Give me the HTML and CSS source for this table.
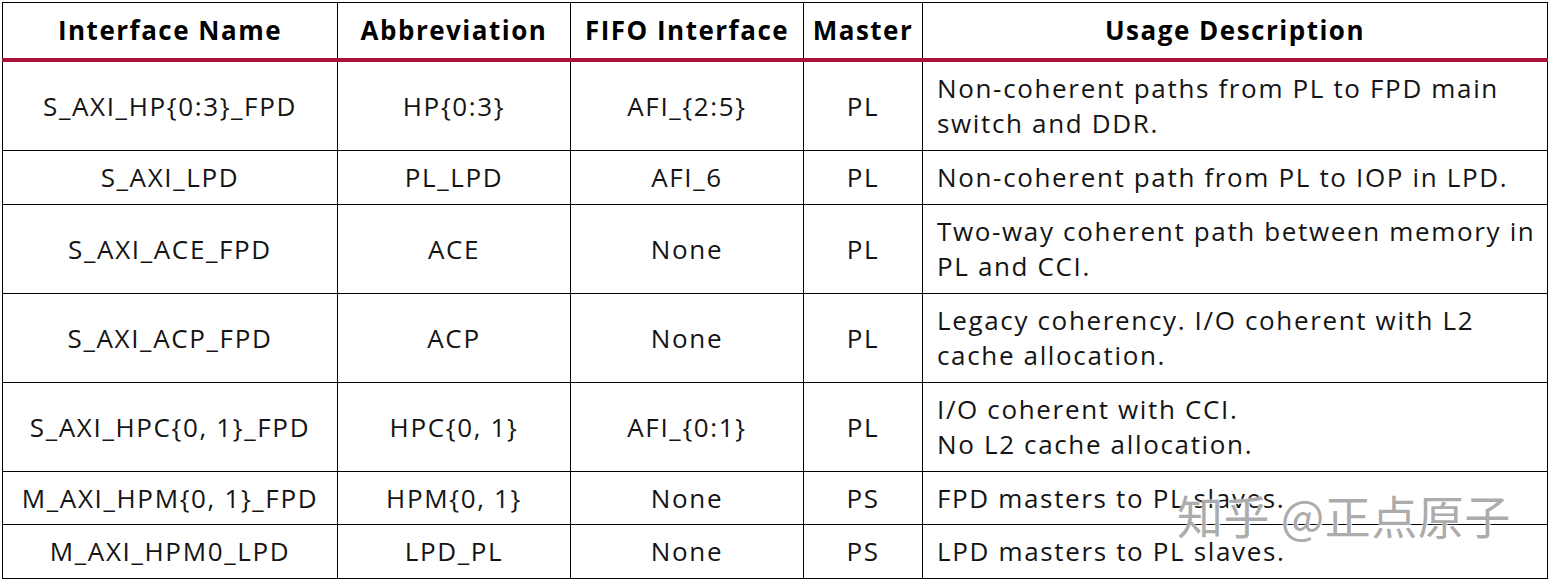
FILE: index.html
```html
<!DOCTYPE html>
<html>
<head>
<meta charset="utf-8">
<link rel="stylesheet" href="styles.css">
</head>
<body>
<div class="wrap">
<table class="spec">
  <colgroup>
    <col class="c1"><col class="c2"><col class="c3"><col class="c4"><col class="c5">
  </colgroup>
  <thead>
    <tr>
      <th>Interface Name</th>
      <th>Abbreviation</th>
      <th>FIFO Interface</th>
      <th>Master</th>
      <th>Usage Description</th>
    </tr>
  </thead>
  <tbody>
    <tr class="two first">
      <td>S_AXI_HP{0:3}_FPD</td><td>HP{0:3}</td><td>AFI_{2:5}</td><td>PL</td>
      <td class="desc">Non-coherent paths from PL to FPD main<br>switch and DDR.</td>
    </tr>
    <tr class="one">
      <td>S_AXI_LPD</td><td>PL_LPD</td><td>AFI_6</td><td>PL</td>
      <td class="desc">Non-coherent path from PL to IOP in LPD.</td>
    </tr>
    <tr class="two">
      <td>S_AXI_ACE_FPD</td><td>ACE</td><td>None</td><td>PL</td>
      <td class="desc">Two-way coherent path between memory in<br>PL and CCI.</td>
    </tr>
    <tr class="two">
      <td>S_AXI_ACP_FPD</td><td>ACP</td><td>None</td><td>PL</td>
      <td class="desc">Legacy coherency. I/O coherent with L2<br>cache allocation.</td>
    </tr>
    <tr class="two">
      <td>S_AXI_HPC{0, 1}_FPD</td><td>HPC{0, 1}</td><td>AFI_{0:1}</td><td>PL</td>
      <td class="desc">I/O coherent with CCI.<br>No L2 cache allocation.</td>
    </tr>
    <tr class="one short">
      <td>M_AXI_HPM{0, 1}_FPD</td><td>HPM{0, 1}</td><td>None</td><td>PS</td>
      <td class="desc">FPD masters to PL slaves.</td>
    </tr>
    <tr class="one">
      <td>M_AXI_HPM0_LPD</td><td>LPD_PL</td><td>None</td><td>PS</td>
      <td class="desc">LPD masters to PL slaves.</td>
    </tr>
  </tbody>
</table>
<div class="watermark">知乎 @正点原子</div>
</div>
</body>
</html>
```
FILE: styles.css
```css
html, body {
  margin: 0;
  padding: 0;
  background: #ffffff;
}
.wrap {
  position: relative;
  padding: 2px 0 0 2px;
  width: 1546px;
}
.spec {
  border-collapse: collapse;
  table-layout: fixed;
  width: 1545px;
  font-family: "Open Sans", "Noto Sans", sans-serif;
  color: #141414;
}
.c1 { width: 335px; }
.c2 { width: 233px; }
.c3 { width: 233px; }
.c4 { width: 119px; }
.c5 { width: 625px; }
.spec th, .spec td {
  border: 1px solid #000;
  text-align: center;
  vertical-align: middle;
  padding: 0;
}
.spec th {
  height: 55px;
  font-size: 26px;
  line-height: 35px;
  font-weight: 700;
  letter-spacing: 1.5px;
  color: #000;
  border-bottom: 4px solid #a8133a;
}
.spec td {
  font-size: 26px;
  letter-spacing: 1.65px;
  line-height: 35px;
  white-space: nowrap;
}
.spec td.desc {
  text-align: left;
  padding-left: 14px;
}
.spec tr.first td { height: 82px; }
.spec tr.two td { height: 88px; }
.spec tr.one td { height: 53px; }
.spec tr.short td { height: 52px; }
.watermark {
  position: absolute;
  left: 1177px;
  top: 481px;
  font-family: "Noto Sans CJK SC", "Open Sans", sans-serif;
  font-size: 46px;
  letter-spacing: 0.5px;
  color: rgba(150, 150, 150, 0.8);
  text-shadow: 0 0 2px #fff, 1px 1px 1px rgba(255,255,255,0.9);
  white-space: nowrap;
  pointer-events: none;
}
```
